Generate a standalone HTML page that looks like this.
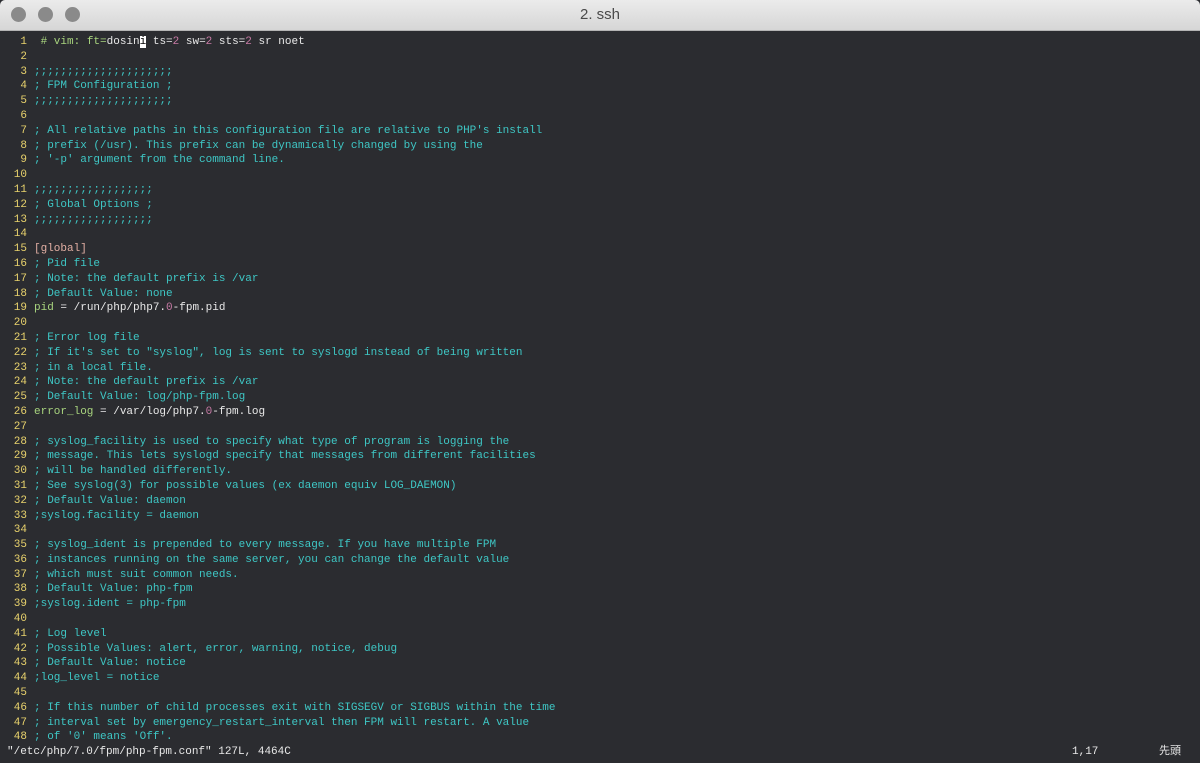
<!DOCTYPE html>
<html><head><meta charset="utf-8"><style>
html,body{margin:0;padding:0;width:1200px;height:763px;overflow:hidden;background:#2b2c30}
.tb{position:absolute;left:0;top:0;width:1200px;height:30px;background:linear-gradient(#ebebeb,#d6d6d6);border-bottom:1px solid #b4b4b4;border-radius:5px 5px 0 0}
.tb .t{position:absolute;left:0;right:0;top:6px;text-align:center;font:15px "Liberation Sans",sans-serif;color:#4a4a4a}
.dot{position:absolute;top:7px;width:15px;height:15px;border-radius:50%;background:#8a8a8a}
.term{position:absolute;left:0;top:35px;font:11px/14.8px "Liberation Mono",monospace;color:#e8e8e8;white-space:pre}
.n{color:#e8d26c;display:inline-block;width:20px;text-align:right;padding-left:7px;margin-right:7px}
.c{color:#3ec7c5}.g{color:#a8d47e}.p{color:#c77aa5}.b{color:#e2afa3}
.cur{background:#fff;color:#000}
.st{position:absolute;top:744px;left:7px;font:11px/16px "Liberation Mono",monospace;color:#e8e8e8;white-space:pre}
</style></head><body>
<div class="tb"><div class="dot" style="left:11px"></div><div class="dot" style="left:38px"></div><div class="dot" style="left:65px"></div><div class="t">2. ssh</div></div>
<div class="term"><span class="n">1</span> <span class="g"># vim: ft=</span>dosin<span class="cur">i</span> ts=<span class="p">2</span> sw=<span class="p">2</span> sts=<span class="p">2</span> sr noet
<span class="n">2</span>
<span class="n">3</span><span class="c">;;;;;;;;;;;;;;;;;;;;;</span>
<span class="n">4</span><span class="c">; FPM Configuration ;</span>
<span class="n">5</span><span class="c">;;;;;;;;;;;;;;;;;;;;;</span>
<span class="n">6</span>
<span class="n">7</span><span class="c">; All relative paths in this configuration file are relative to PHP's install</span>
<span class="n">8</span><span class="c">; prefix (/usr). This prefix can be dynamically changed by using the</span>
<span class="n">9</span><span class="c">; '-p' argument from the command line.</span>
<span class="n">10</span>
<span class="n">11</span><span class="c">;;;;;;;;;;;;;;;;;;</span>
<span class="n">12</span><span class="c">; Global Options ;</span>
<span class="n">13</span><span class="c">;;;;;;;;;;;;;;;;;;</span>
<span class="n">14</span>
<span class="n">15</span><span class="b">[global]</span>
<span class="n">16</span><span class="c">; Pid file</span>
<span class="n">17</span><span class="c">; Note: the default prefix is /var</span>
<span class="n">18</span><span class="c">; Default Value: none</span>
<span class="n">19</span><span class="g">pid</span> = /run/php/php7.<span class="p">0</span>-fpm.pid
<span class="n">20</span>
<span class="n">21</span><span class="c">; Error log file</span>
<span class="n">22</span><span class="c">; If it's set to "syslog", log is sent to syslogd instead of being written</span>
<span class="n">23</span><span class="c">; in a local file.</span>
<span class="n">24</span><span class="c">; Note: the default prefix is /var</span>
<span class="n">25</span><span class="c">; Default Value: log/php-fpm.log</span>
<span class="n">26</span><span class="g">error_log</span> = /var/log/php7.<span class="p">0</span>-fpm.log
<span class="n">27</span>
<span class="n">28</span><span class="c">; syslog_facility is used to specify what type of program is logging the</span>
<span class="n">29</span><span class="c">; message. This lets syslogd specify that messages from different facilities</span>
<span class="n">30</span><span class="c">; will be handled differently.</span>
<span class="n">31</span><span class="c">; See syslog(3) for possible values (ex daemon equiv LOG_DAEMON)</span>
<span class="n">32</span><span class="c">; Default Value: daemon</span>
<span class="n">33</span><span class="c">;syslog.facility = daemon</span>
<span class="n">34</span>
<span class="n">35</span><span class="c">; syslog_ident is prepended to every message. If you have multiple FPM</span>
<span class="n">36</span><span class="c">; instances running on the same server, you can change the default value</span>
<span class="n">37</span><span class="c">; which must suit common needs.</span>
<span class="n">38</span><span class="c">; Default Value: php-fpm</span>
<span class="n">39</span><span class="c">;syslog.ident = php-fpm</span>
<span class="n">40</span>
<span class="n">41</span><span class="c">; Log level</span>
<span class="n">42</span><span class="c">; Possible Values: alert, error, warning, notice, debug</span>
<span class="n">43</span><span class="c">; Default Value: notice</span>
<span class="n">44</span><span class="c">;log_level = notice</span>
<span class="n">45</span>
<span class="n">46</span><span class="c">; If this number of child processes exit with SIGSEGV or SIGBUS within the time</span>
<span class="n">47</span><span class="c">; interval set by emergency_restart_interval then FPM will restart. A value</span>
<span class="n">48</span><span class="c">; of '0' means 'Off'.</span></div>
<div class="st">"/etc/php/7.0/fpm/php-fpm.conf" 127L, 4464C</div>
<div class="st" style="left:1072px">1,17</div>
<div class="st" style="left:1159px;font-family:'Liberation Mono','Noto Sans CJK JP',monospace">先頭</div>
</body></html>
